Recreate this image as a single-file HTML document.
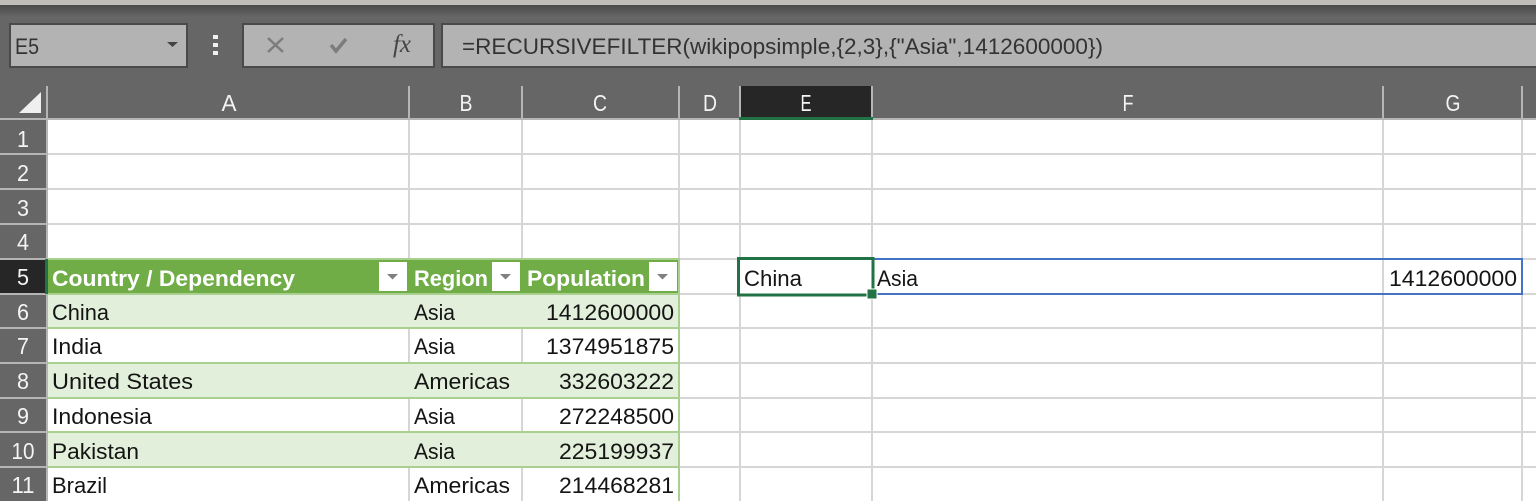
<!DOCTYPE html>
<html><head><meta charset="utf-8"><style>
html,body{margin:0;padding:0;background:#fff;width:1536px;height:501px;overflow:hidden}
svg{display:block}
text{font-family:"Liberation Sans",sans-serif}
.c{font-size:22px;fill:#141414}
.h{font-size:22px;fill:#fff;font-weight:bold}
.l{font-size:23px;fill:#f4f4f4;text-anchor:middle}
.f{font-size:22px;fill:#333}
</style></head><body>
<svg width="1536" height="501" viewBox="0 0 1536 501" lang="en" xmlns="http://www.w3.org/2000/svg">
<defs><linearGradient id="g" x1="0" y1="0" x2="0" y2="1"><stop offset="0" stop-color="#4a4a4a"/><stop offset="1" stop-color="#666"/></linearGradient></defs>
<rect width="1536" height="501" fill="#fff"/>
<rect width="1536" height="120" fill="#666"/>
<rect y="5" width="1536" height="12" fill="url(#g)"/>
<rect width="1536" height="5" fill="#c0bcb8"/>
<rect x="0" y="120" width="47" height="381" fill="#666"/>

<!-- formula bar -->
<rect x="10" y="24" width="177" height="43" fill="#b3b3b3" stroke="#4a4a4a" stroke-width="2"/>
<text x="15" y="54" class="f" textLength="24" lengthAdjust="spacingAndGlyphs">E5</text>
<path d="M167 42h11l-5.500 5z" fill="#444"/>
<rect x="213" y="35" width="5" height="4" fill="#f0f0f0"/><rect x="213" y="43" width="5" height="4" fill="#f0f0f0"/><rect x="213" y="51" width="5" height="4" fill="#f0f0f0"/>
<rect x="243" y="24" width="191" height="43" fill="#b3b3b3" stroke="#4a4a4a" stroke-width="2"/>
<path d="M268 38l15 14M283 38l-15 14" stroke="#7c7c7c" stroke-width="2.500" fill="none"/>
<path d="M331 45l5 6 10-12" stroke="#7c7c7c" stroke-width="3.500" fill="none"/>
<text x="393" y="52" textLength="18" lengthAdjust="spacingAndGlyphs" style="font-family:'Liberation Serif',serif;font-style:italic;font-size:25px;fill:#444">fx</text>
<rect x="442" y="24" width="1100" height="43" fill="#b3b3b3" stroke="#4a4a4a" stroke-width="2"/>
<text x="462" y="54" class="f" textLength="641" lengthAdjust="spacingAndGlyphs">=RECURSIVEFILTER(wikipopsimple,{2,3},{"Asia",1412600000})</text>

<!-- header -->
<rect x="740" y="86" width="132" height="32" fill="#262626"/>
<path d="M19 113L41 92V113Z" fill="#efefef"/>
<g fill="#b5b5b5">
<rect x="46" y="86" width="2" height="34"/><rect x="408" y="86" width="2" height="34"/><rect x="521" y="86" width="2" height="34"/><rect x="678" y="86" width="2" height="34"/><rect x="739" y="86" width="2" height="34"/><rect x="871" y="86" width="2" height="34"/><rect x="1382" y="86" width="2" height="34"/><rect x="1521" y="86" width="2" height="34"/>
<rect x="0" y="118" width="1536" height="2"/>
</g>
<rect x="739" y="117" width="134" height="3" fill="#217346"/>
<text x="229" y="111" class="l" textLength="15" lengthAdjust="spacingAndGlyphs">A</text><text x="466" y="111" class="l" textLength="13" lengthAdjust="spacingAndGlyphs">B</text><text x="600" y="111" class="l" textLength="14" lengthAdjust="spacingAndGlyphs">C</text><text x="710" y="111" class="l" textLength="14" lengthAdjust="spacingAndGlyphs">D</text><text x="806" y="111" class="l" textLength="11" lengthAdjust="spacingAndGlyphs">E</text><text x="1128" y="111" class="l" textLength="11" lengthAdjust="spacingAndGlyphs">F</text><text x="1453" y="111" class="l" textLength="15" lengthAdjust="spacingAndGlyphs">G</text>

<!-- grid -->
<g fill="#d6d6d6">
<rect x="408" y="120" width="2" height="381"/><rect x="521" y="120" width="2" height="381"/><rect x="678" y="120" width="2" height="381"/><rect x="739" y="120" width="2" height="381"/><rect x="871" y="120" width="2" height="381"/><rect x="1382" y="120" width="2" height="381"/><rect x="1521" y="120" width="2" height="381"/>
<rect x="47" y="153" width="1489" height="2"/><rect x="47" y="188" width="1489" height="2"/><rect x="47" y="223" width="1489" height="2"/><rect x="47" y="258" width="1489" height="2"/><rect x="47" y="293" width="1489" height="2"/><rect x="47" y="327" width="1489" height="2"/><rect x="47" y="362" width="1489" height="2"/><rect x="47" y="397" width="1489" height="2"/><rect x="47" y="431" width="1489" height="2"/><rect x="47" y="466" width="1489" height="2"/>
</g>

<!-- row headers -->
<rect x="0" y="259" width="46" height="34" fill="#262626"/>
<g fill="#b5b5b5">
<rect x="0" y="153" width="46" height="2"/><rect x="0" y="188" width="46" height="2"/><rect x="0" y="223" width="46" height="2"/><rect x="0" y="258" width="46" height="2"/><rect x="0" y="293" width="46" height="2"/><rect x="0" y="327" width="46" height="2"/><rect x="0" y="362" width="46" height="2"/><rect x="0" y="397" width="46" height="2"/><rect x="0" y="431" width="46" height="2"/><rect x="0" y="466" width="46" height="2"/>
<rect x="46" y="120" width="2" height="381"/>
</g>
<rect x="45" y="259" width="3" height="35" fill="#217346"/>
<text x="23" y="147" class="l" textLength="12" lengthAdjust="spacingAndGlyphs">1</text><text x="23" y="181" class="l" textLength="12" lengthAdjust="spacingAndGlyphs">2</text><text x="23" y="216" class="l" textLength="12" lengthAdjust="spacingAndGlyphs">3</text><text x="23" y="250" class="l" textLength="12" lengthAdjust="spacingAndGlyphs">4</text><text x="23" y="285" class="l" textLength="12" lengthAdjust="spacingAndGlyphs">5</text><text x="23" y="320" class="l" textLength="12" lengthAdjust="spacingAndGlyphs">6</text><text x="23" y="354" class="l" textLength="12" lengthAdjust="spacingAndGlyphs">7</text><text x="23" y="389" class="l" textLength="12" lengthAdjust="spacingAndGlyphs">8</text><text x="23" y="424" class="l" textLength="12" lengthAdjust="spacingAndGlyphs">9</text><text x="23" y="459" class="l" textLength="23" lengthAdjust="spacingAndGlyphs">10</text><text x="23" y="493" class="l" textLength="23" lengthAdjust="spacingAndGlyphs">11</text>

<!-- table -->
<rect x="48" y="260" width="631" height="33" fill="#70ad47"/>
<rect x="48" y="294" width="631" height="34" fill="#e2efda"/>
<rect x="48" y="364" width="631" height="34" fill="#e2efda"/>
<rect x="48" y="433" width="631" height="34" fill="#e2efda"/>
<g fill="#a9d08e">
<rect x="48" y="258" width="632" height="2"/><rect x="48" y="293" width="632" height="2"/><rect x="48" y="327" width="632" height="2"/><rect x="48" y="362" width="632" height="2"/><rect x="48" y="397" width="632" height="2"/><rect x="48" y="431" width="632" height="2"/><rect x="48" y="466" width="632" height="2"/>
<rect x="678" y="258" width="2" height="243"/>
</g>
<g fill="#fff"><rect x="379" y="262" width="28" height="29"/><rect x="492" y="262" width="28" height="29"/><rect x="649" y="262" width="28" height="29"/></g>
<g fill="#808080"><path d="M387 274h11l-5.500 5.500z"/><path d="M500 274h11l-5.500 5.500z"/><path d="M657 274h11l-5.500 5.500z"/></g>

<text x="52" y="286" class="h" textLength="243" lengthAdjust="spacingAndGlyphs">Country / Dependency</text>
<text x="414" y="286" class="h" textLength="74" lengthAdjust="spacingAndGlyphs">Region</text>
<text x="527" y="286" class="h" textLength="118" lengthAdjust="spacingAndGlyphs">Population</text>

<text x="52" y="320" class="c" textLength="57" lengthAdjust="spacingAndGlyphs">China</text>
<text x="52" y="354" class="c" textLength="50" lengthAdjust="spacingAndGlyphs">India</text>
<text x="52" y="389" class="c" textLength="141" lengthAdjust="spacingAndGlyphs">United States</text>
<text x="52" y="424" class="c" textLength="100" lengthAdjust="spacingAndGlyphs">Indonesia</text>
<text x="52" y="459" class="c" textLength="87" lengthAdjust="spacingAndGlyphs">Pakistan</text>
<text x="52" y="493" class="c" textLength="55" lengthAdjust="spacingAndGlyphs">Brazil</text>

<text x="414" y="320" class="c" textLength="41" lengthAdjust="spacingAndGlyphs">Asia</text>
<text x="414" y="354" class="c" textLength="41" lengthAdjust="spacingAndGlyphs">Asia</text>
<text x="414" y="389" class="c" textLength="96" lengthAdjust="spacingAndGlyphs">Americas</text>
<text x="414" y="424" class="c" textLength="41" lengthAdjust="spacingAndGlyphs">Asia</text>
<text x="414" y="459" class="c" textLength="41" lengthAdjust="spacingAndGlyphs">Asia</text>
<text x="414" y="493" class="c" textLength="96" lengthAdjust="spacingAndGlyphs">Americas</text>

<text x="546" y="320" class="c" textLength="128" lengthAdjust="spacingAndGlyphs">1412600000</text>
<text x="546" y="354" class="c" textLength="128" lengthAdjust="spacingAndGlyphs">1374951875</text>
<text x="559" y="389" class="c" textLength="115" lengthAdjust="spacingAndGlyphs">332603222</text>
<text x="559" y="424" class="c" textLength="115" lengthAdjust="spacingAndGlyphs">272248500</text>
<text x="559" y="459" class="c" textLength="115" lengthAdjust="spacingAndGlyphs">225199937</text>
<text x="559" y="493" class="c" textLength="115" lengthAdjust="spacingAndGlyphs">214468281</text>

<!-- spill -->
<rect x="740" y="259" width="782" height="35" fill="#fff"/>
<rect x="1382" y="260" width="2" height="33" fill="#d6d6d6"/>
<rect x="873" y="259" width="649" height="35" fill="none" stroke="#4472c4" stroke-width="2"/>
<rect x="738.500" y="258.500" width="134.500" height="36.500" fill="#fff" stroke="#217346" stroke-width="3"/>
<rect x="867" y="289" width="10" height="10" fill="#217346" stroke="#fff" stroke-width="1"/>
<text x="744" y="286" class="c" textLength="58" lengthAdjust="spacingAndGlyphs">China</text>
<text x="877" y="286" class="c" textLength="41" lengthAdjust="spacingAndGlyphs">Asia</text>
<text x="1389" y="286" class="c" textLength="128" lengthAdjust="spacingAndGlyphs">1412600000</text>
</svg>
</body></html>
